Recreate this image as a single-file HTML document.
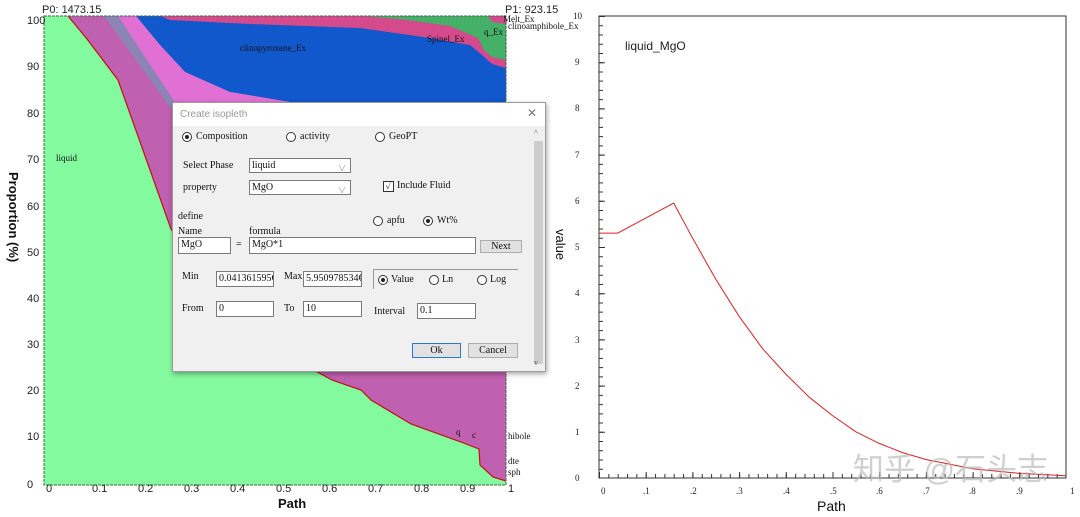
<!DOCTYPE html>
<html><head><meta charset="utf-8"><style>
body{margin:0;width:1080px;height:517px;background:#fff;position:relative;overflow:hidden;font-family:"Liberation Sans",sans-serif}
.a{position:absolute;white-space:nowrap}
.d{position:absolute;left:172px;top:102px;width:372px;height:268px;background:#f0f0f0;border:1px solid #9a9a9a;box-shadow:1px 2px 5px rgba(0,0,0,.35);font-family:"Liberation Serif","Noto Serif CJK SC",serif;font-size:10px;color:#111}
.d .a{line-height:12px}
.tb{position:absolute;left:0;top:0;width:372px;height:23px;background:#fff}
.in{position:absolute;background:#fff;border:1px solid #7a7a7a;height:15px;box-sizing:border-box;font-size:10px;line-height:13px;padding-left:2px;overflow:hidden}
.r{position:absolute;width:10px;height:10px;border:1px solid #333;border-radius:50%;background:#fff;box-sizing:border-box}
.r.on::after{content:"";position:absolute;left:2px;top:2px;width:4px;height:4px;border-radius:50%;background:#222}
.btn{position:absolute;background:#e1e1e1;border:1px solid #adadad;box-sizing:border-box;text-align:center;font-size:10px;line-height:13px}
.chev{position:absolute;right:4px;top:3px;font-size:8px;color:#555}
</style></head><body>
<svg width="1080" height="517" style="position:absolute;left:0;top:0" font-family="Liberation Sans">
<rect x="44" y="16" width="462" height="469" fill="#c060b0"/>
<polygon fill="#1058cc" points="136,16 506,16 506,110 290,110 290,102 230,92 185,72 160,45"/>
<polygon fill="#e070d4" points="118,16 136,16 160,45 185,72 230,92 290,102 290,110 178,110"/>
<polygon fill="#8c84b4" points="104,16 118,16 180,110 172,110"/>
<polygon fill="#d44a8c" points="160,16 506,16 506,68 492,64 482,55 470,45 430,38 360,28 250,24 170,20"/>
<polygon fill="#44b068" points="360,16 506,16 506,60 492,57 484,50 478,38 450,26 400,19"/>
<polygon fill="#d44a8c" points="488,16 506,16 506,24 492,22"/>
<polygon fill="#84fa9e" points="44,16 68,16 87,39 118,80 171,229 240,330 332,380 361,390 371,400 411,424 461,442 479,449 480,465 493,477 506,481 506,485 44,485"/>
<polyline fill="none" stroke="#c01010" stroke-width="1.2" points="68,16 87,39 118,80 171,229 240,330 332,380 361,390 371,400 411,424 461,442 479,449 480,465 493,477 506,481"/>
<rect x="44" y="16" width="462" height="469" fill="none" stroke="#446644" stroke-dasharray="3 1"/>
<g fill="#222" font-size="11">
<text x="42" y="13">P0: 1473.15</text><text x="505" y="13">P1: 923.15</text>
<text x="27" y="24">100</text><text x="27" y="70">90</text><text x="27" y="117">80</text><text x="27" y="163">70</text><text x="27" y="210">60</text><text x="27" y="256">50</text><text x="27" y="302">40</text><text x="27" y="348">30</text><text x="27" y="394">20</text><text x="27" y="440">10</text><text x="27" y="488">0</text>
<text x="46" y="492">0</text><text x="92" y="492">0.1</text><text x="138" y="492">0.2</text><text x="184" y="492">0.3</text><text x="230" y="492">0.4</text><text x="276" y="492">0.5</text><text x="322" y="492">0.6</text><text x="368" y="492">0.7</text><text x="414" y="492">0.8</text><text x="460" y="492">0.9</text><text x="508" y="492">1</text>
</g>
<text x="278" y="508" font-size="13" font-weight="bold" fill="#111">Path</text>
<text transform="translate(9,172) rotate(90)" font-size="13" font-weight="bold" fill="#111">Proportion (%)</text>
<g font-family="Liberation Serif" font-size="9" fill="#111">
<text x="56" y="161">liquid</text><text x="240" y="51">clinopyroxene_Ex</text><text x="427" y="42">Spinel_Ex</text><text x="484" y="35">q_Ex</text>
<text x="503" y="22">Melt_Ex</text><text x="508" y="29">clinoamphibole_Ex</text>
<text x="456" y="435">q</text><text x="472" y="438">c</text><text x="508" y="439">hibole</text><text x="508" y="464">dte</text><text x="508" y="475">sph</text>
</g>
<!-- right plot -->
<rect x="599" y="16" width="467" height="462" fill="none" stroke="#333"/>
<line x1="601" y1="16" x2="601" y2="478" stroke="#333" stroke-width="4" stroke-dasharray="1 8.24"/>
<line x1="602" y1="16" x2="602" y2="478" stroke="#333" stroke-width="6" stroke-dasharray="1 45.2"/>
<line x1="599" y1="476" x2="1066" y2="476" stroke="#333" stroke-width="4" stroke-dasharray="1 8.34"/>
<line x1="599" y1="475" x2="1066" y2="475" stroke="#333" stroke-width="6" stroke-dasharray="1 45.7"/>
<polyline fill="none" stroke="#e02020" stroke-width="1" points="599,233.1 617.7,233.1 673.7,203.1 692.4,237.8 715.8,279.3 739.1,316.3 762.5,348.6 785.8,374.1 809.2,397.2 832.5,415.6 855.9,431.8 879.2,443.4 902.6,452.6 925.9,459.5 972.6,468.8 1019.3,473.4 1066,475.7"/>
<g fill="#222" font-size="9" font-family="Liberation Serif">
<text x="573" y="19">10</text><text x="575" y="65">9</text><text x="575" y="111">8</text><text x="575" y="158">7</text><text x="575" y="204">6</text><text x="575" y="250">5</text><text x="575" y="296">4</text><text x="575" y="343">3</text><text x="575" y="389">2</text><text x="575" y="435">1</text><text x="575" y="481">0</text>
<text x="601" y="494">0</text><text x="643" y="494">.1</text><text x="690" y="494">.2</text><text x="736" y="494">.3</text><text x="783" y="494">.4</text><text x="830" y="494">.5</text><text x="876" y="494">.6</text><text x="923" y="494">.7</text><text x="969" y="494">.8</text><text x="1016" y="494">.9</text><text x="1070" y="494">1</text>
</g>
<text x="625" y="50" font-size="12" fill="#222">liquid_MgO</text>
<text transform="translate(556,229) rotate(90)" font-size="13" fill="#111">value</text>
<text x="817" y="511" font-size="14" fill="#111">Path</text>
<text x="853" y="480" font-size="31" fill="#bbb" fill-opacity="0.7" font-family="Liberation Sans,Noto Sans CJK SC,sans-serif">知乎 @石头志</text>
</svg>
<div class="d">
<div class="tb"></div>
<div class="a" style="left:7px;top:6px;color:#999;font-family:'Liberation Sans',sans-serif;font-size:10px">Create isopleth</div>
<div class="a" style="left:354px;top:4px;color:#777;font-size:12px;font-family:'Liberation Sans'">✕</div>
<div style="position:absolute;left:360px;top:23px;width:11px;height:245px;background:#f0f0f0"></div>
<div style="position:absolute;left:361px;top:38px;width:9px;height:223px;background:#cdcdcd"></div>
<div class="a" style="left:361px;top:24px;font-size:8px;color:#555">^</div>
<div class="a" style="left:361px;top:254px;font-size:8px;color:#555">v</div>
<div class="r on" style="left:9px;top:29px"></div><div class="a" style="left:23px;top:28px">Composition</div>
<div class="r" style="left:113px;top:29px"></div><div class="a" style="left:127px;top:28px">activity</div>
<div class="r" style="left:202px;top:29px"></div><div class="a" style="left:216px;top:28px">GeoPT</div>
<div class="a" style="left:10px;top:57px">Select Phase</div>
<div class="in" style="left:76px;top:55px;width:102px">liquid<span class="chev">∨</span></div>
<div class="a" style="left:10px;top:79px">property</div>
<div class="in" style="left:76px;top:77px;width:102px">MgO<span class="chev">∨</span></div>
<div style="position:absolute;left:210px;top:78px;width:11px;height:11px;border:1px solid #333;background:#fff;box-sizing:border-box;font-size:9px;line-height:9px;text-align:center">✓</div>
<div class="a" style="left:224px;top:77px">Include Fluid</div>
<div class="a" style="left:5px;top:108px">define</div>
<div class="r" style="left:200px;top:113px"></div><div class="a" style="left:214px;top:112px">apfu</div>
<div class="r on" style="left:250px;top:113px"></div><div class="a" style="left:264px;top:112px">Wt%</div>
<div class="a" style="left:5px;top:123px">Name</div><div class="a" style="left:76px;top:123px">formula</div>
<div class="in" style="left:5px;top:134px;width:53px;height:17px">MgO</div>
<div class="a" style="left:63px;top:136px">=</div>
<div class="in" style="left:76px;top:134px;width:227px;height:17px">MgO*1</div>
<div class="btn" style="left:307px;top:137px;width:42px;height:13px;line-height:11px">Next</div>
<div class="a" style="left:9px;top:168px">Min</div>
<div class="in" style="left:43px;top:168px;width:58px;height:16px">0.041361595C</div>
<div class="a" style="left:111px;top:168px">Max</div>
<div class="in" style="left:130px;top:168px;width:59px;height:16px">5.950978534€</div>
<div style="position:absolute;left:200px;top:166px;width:145px;height:20px;border-top:1px solid #999;border-left:1px solid #999;box-sizing:border-box"></div>
<div class="r on" style="left:205px;top:172px"></div><div class="a" style="left:218px;top:171px">Value</div>
<div class="r" style="left:256px;top:172px"></div><div class="a" style="left:269px;top:171px">Ln</div>
<div class="r" style="left:304px;top:172px"></div><div class="a" style="left:317px;top:171px">Log</div>
<div class="a" style="left:9px;top:200px">From</div>
<div class="in" style="left:43px;top:198px;width:58px;height:16px">0</div>
<div class="a" style="left:111px;top:200px">To</div>
<div class="in" style="left:130px;top:198px;width:59px;height:16px">10</div>
<div class="a" style="left:201px;top:203px">Interval</div>
<div class="in" style="left:244px;top:200px;width:59px;height:16px">0.1</div>
<div class="btn" style="left:239px;top:240px;width:49px;height:15px;border:1px solid #2a7ad0">Ok</div>
<div class="btn" style="left:295px;top:240px;width:50px;height:15px">Cancel</div>
</div>
</body></html>
